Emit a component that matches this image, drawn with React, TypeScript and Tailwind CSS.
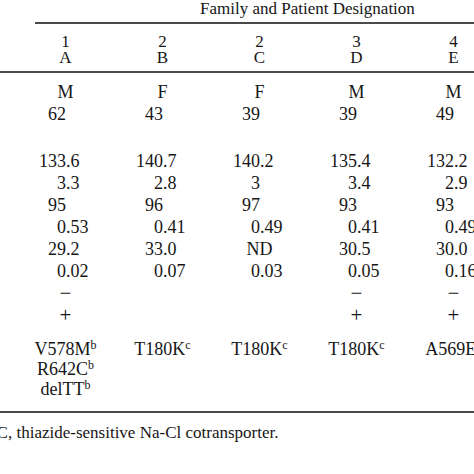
type Cell = string | null;

const columns = [
  { family: "1", patient: "A" },
  { family: "2", patient: "B" },
  { family: "2", patient: "C" },
  { family: "3", patient: "D" },
  { family: "4", patient: "E" },
];

const sex = ["M", "F", "F", "M", "M"];

// decimal-aligned rows; null = empty row spacer
const numericRows: (Cell[] | null)[] = [
  ["62", "43", "39", "39", "49"],
  null,
  ["133.6", "140.7", "140.2", "135.4", "132.2"],
  ["3.3", "2.8", "3", "3.4", "2.9"],
  ["95", "96", "97", "93", "93"],
  ["0.53", "0.41", "0.49", "0.41", "0.49"],
  ["29.2", "33.0", "ND", "30.5", "30.0"],
  ["0.02", "0.07", "0.03", "0.05", "0.16"],
  ["\u2212", null, null, "\u2212", "\u2212"],
  ["+", null, null, "+", "+"],
];

const mutations: [string, string][][] = [
  [
    ["V578M", "b"],
    ["R642C", "b"],
    ["delTT", "b"],
  ],
  [["T180K", "c"]],
  [["T180K", "c"]],
  [["T180K", "c"]],
  [["A569E", "c"]],
];

function DecimalCell({ value }: { value: Cell }) {
  if (value === null) return <div className="w-[97px] shrink-0" />;
  if (value === "ND") {
    return <div className="w-[97px] shrink-0 text-center">ND</div>;
  }
  if (value === "+" || value === "\u2212") {
    return <div className="w-[97px] shrink-0 text-center text-[21px]">{value}</div>;
  }
  const dot = value.indexOf(".");
  const whole = dot === -1 ? value : value.slice(0, dot);
  const frac = dot === -1 ? "" : value.slice(dot);
  return (
    <div className="flex w-[97px] shrink-0">
      <span className="w-[49px] shrink-0 text-right">{whole}</span>
      <span className="whitespace-nowrap">{frac}</span>
    </div>
  );
}

export default function App() {
  return (
    <div
      className="w-[474px] h-[474px] overflow-hidden bg-white text-[#161616] text-[17px]"
      style={{ fontFamily: '"Liberation Serif", "Times New Roman", serif' }}
    >
      {/* Spanning header */}
      <div className="pl-[200px] leading-[18px] pb-[4px] whitespace-nowrap">
        Family and Patient Designation
      </div>
      <div className="ml-[35px] h-[2px] bg-[#4a4a4a]" />

      {/* Family / patient designation */}
      <div className="flex pl-[17px] pt-[10px] pb-[5px] leading-[16px]">
        {columns.map((c, i) => (
          <div key={i} className="w-[97px] shrink-0 text-center">
            <div>{c.family}</div>
            <div>{c.patient}</div>
          </div>
        ))}
      </div>
      <div className="h-[2px] bg-[#4a4a4a]" />

      {/* Body */}
      <div className="pl-[17px] pt-[8px] text-[18px] leading-[22px]">
        <div className="flex">
          {sex.map((s, i) => (
            <div key={i} className="w-[97px] shrink-0 text-center">
              {s}
            </div>
          ))}
        </div>
        {numericRows.map((row, r) =>
          row === null ? (
            <div key={r} className="h-[25px]" />
          ) : (
            <div key={r} className="flex">
              {row.map((v, i) => (
                <DecimalCell key={i} value={v} />
              ))}
            </div>
          )
        )}
        <div className="flex pt-[13px] leading-[20px]">
          {mutations.map((m, i) => (
            <div key={i} className="w-[97px] shrink-0 flex flex-col items-center">
              {m.map(([name, note], j) => (
                <div key={j} className="whitespace-nowrap">
                  {name}
                  <sup className="text-[12px]">{note}</sup>
                </div>
              ))}
            </div>
          ))}
        </div>
      </div>

      <div className="mt-[12px] h-[2px] bg-[#4a4a4a]" />
      <div className="-ml-[27px] pt-[11px] leading-[18px] whitespace-nowrap">
        NCC, thiazide-sensitive Na-Cl cotransporter.
      </div>
    </div>
  );
}
